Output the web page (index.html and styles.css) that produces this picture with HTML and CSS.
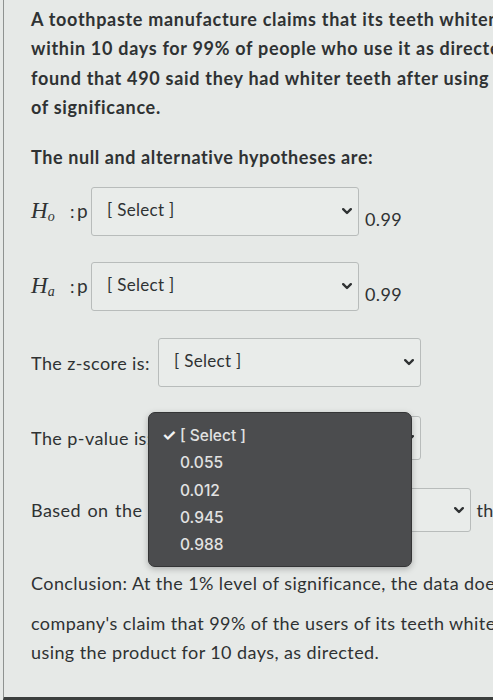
FILE: index.html
```html
<!DOCTYPE html>
<html>
<head>
<meta charset="utf-8">
<link rel="stylesheet" href="styles.css">
</head>
<body>
<div class="frame">
  <p class="question">A toothpaste manufacture claims that its teeth whitening product works<br>within 10 days for 99% of people who use it as directed. In a sample of 500 people, it was<br>found that 490 said they had whiter teeth after using the product. Test at the 1% level<br>of significance.</p>

  <p class="prompt">The null and alternative hypotheses are:</p>

  <div class="hyp first">
    <span class="label"><span class="math"><i>H</i><sub>o</sub></span><span class="colon">:</span><span class="pv">p</span></span>
    <div class="select wide"><span class="val">[ Select ]</span><svg class="chev" viewBox="0 0 10 7"><polyline points="1.2,1.2 5,5 8.8,1.2"/></svg></div>
    <span class="after">0.99</span>
  </div>

  <div class="hyp">
    <span class="label"><span class="math"><i>H</i><sub>a</sub></span><span class="colon">:</span><span class="pv">p</span></span>
    <div class="select wide"><span class="val">[ Select ]</span><svg class="chev" viewBox="0 0 10 7"><polyline points="1.2,1.2 5,5 8.8,1.2"/></svg></div>
    <span class="after">0.99</span>
  </div>

  <div class="row z">
    <span class="rlabel">The z-score is:</span>
    <div class="select mid"><span class="val">[ Select ]</span><svg class="chev" viewBox="0 0 10 7"><polyline points="1.2,1.2 5,5 8.8,1.2"/></svg></div>
  </div>

  <div class="row p">
    <span class="rlabel">The p-value is:</span>
    <div class="select mid short"><span class="val">[ Select ]</span><svg class="chev" viewBox="0 0 10 7"><polyline points="1.2,1.2 5,5 8.8,1.2"/></svg></div>
    <ul class="menu">
      <li class="checked"><span class="check">✓</span>[ Select ]</li>
      <li>0.055</li>
      <li>0.012</li>
      <li>0.945</li>
      <li>0.988</li>
    </ul>
  </div>

  <div class="row b">
    <span class="rlabel blabel">Based on the p-value, we</span>
    <div class="select based short"><span class="val">[ Select ]</span><svg class="chev" viewBox="0 0 10 7"><polyline points="1.2,1.2 5,5 8.8,1.2"/></svg></div>
    <span class="after2">the null hypothesis.</span>
  </div>

  <p class="concl">Conclusion: At the 1% level of significance, the data does not provide sufficient evidence to reject the</p>
  <p class="concl2">company's claim that 99% of the users of its teeth whitening product have whiter teeth after<br>using the product for 10 days, as directed.</p>
</div>
</body>
</html>
```

FILE: styles.css
```css
html, body {
  margin: 0;
  padding: 0;
}
body {
  width: 493px;
  height: 700px;
  overflow: hidden;
  background: #e6e9e7;
  font-family: "Lato", "Liberation Sans", sans-serif;
  color: #2f3233;
}
.frame {
  box-sizing: border-box;
  margin-left: 3px;
  height: 700px;
  border-left: 1px solid #8f9391;
  border-bottom: 3px solid #3c3f3e;
  padding: 5px 0 0 27px;
  white-space: nowrap;
  position: relative;
}
.question {
  margin: 0;
  font-size: 18px;
  font-weight: 700;
  letter-spacing: 0.7px;
  line-height: 29.3px;
}
.prompt {
  margin: 21px 0 0;
  font-size: 18px;
  font-weight: 700;
  letter-spacing: 0.6px;
  line-height: 29px;
}
.hyp {
  display: flex;
  align-items: center;
  margin-top: 15px;
}
.hyp + .hyp {
  margin-top: 26px;
}
.label {
  width: 60px;
  flex-shrink: 0;
  display: flex;
  align-items: baseline;
}
.math {
  font-family: "Liberation Serif", "DejaVu Serif", serif;
  font-size: 23px;
  width: 39px;
}
.math sub {
  font-style: italic;
  font-size: 14px;
  vertical-align: -3px;
}
.colon {
  font-size: 18px;
  width: 7px;
}
.pv {
  font-size: 19px;
}
.select {
  box-sizing: border-box;
  display: flex;
  align-items: center;
  justify-content: space-between;
  height: 49px;
  border: 1px solid #b8bcbb;
  border-radius: 3px;
  background: #e9ecea;
  padding: 0 5px 0 15px;
  font-size: 17px;
  letter-spacing: 0.3px;
  color: #2f3233;
  flex-shrink: 0;
}
.select.wide {
  width: 268px;
}
.select.mid {
  width: 263px;
}
.select.short {
  height: 44px;
}
.select.based {
  width: 220px;
}
.val {
  position: relative;
  top: -2px;
}
.chev {
  width: 10px;
  height: 7px;
  margin-right: 1px;
}
.chev polyline {
  fill: none;
  stroke: #2f3233;
  stroke-width: 2.4;
  stroke-linecap: round;
  stroke-linejoin: round;
}
.after {
  align-self: flex-end;
  flex-shrink: 0;
  margin: 0 0 7px 6px;
  font-size: 18px;
  letter-spacing: 0.4px;
  line-height: 20px;
}
.row {
  display: flex;
  align-items: center;
}
.row.z {
  margin-top: 27px;
}
.row.p {
  margin-top: 29px;
  position: relative;
}
.row.b {
  margin-top: 28px;
}
.rlabel {
  flex-shrink: 0;
  font-size: 18px;
  letter-spacing: 0.42px;
  margin-right: 6px;
  width: 121px;
  overflow: hidden;
}
.row.b .blabel {
  width: auto;
  margin-right: 6px;
  word-spacing: 1.5px;
}
.after2 {
  flex-shrink: 0;
  font-size: 18px;
  letter-spacing: 0.42px;
  margin-left: 5px;
}
.menu {
  position: absolute;
  left: 117px;
  top: -4px;
  width: 264px;
  box-sizing: border-box;
  margin: 0;
  padding: 9px 0 7px;
  list-style: none;
  background: #4b4c4e;
  border: 1px solid #343536;
  border-radius: 7px;
  box-shadow: 0 2px 6px rgba(0, 0, 0, 0.25);
  font-family: "Inter", "Noto Sans", sans-serif;
  font-size: 15.5px;
  font-weight: 500;
  color: #e2e2e2;
  z-index: 2;
}
.menu li {
  height: 27.3px;
  line-height: 27px;
  padding-left: 31px;
  position: relative;
}
.menu .check {
  position: absolute;
  left: 13px;
  top: 0;
  color: #f4f4f4;
  font-size: 16px;
  font-weight: 700;
}
.concl {
  margin: 37px 0 0;
  font-size: 18px;
  letter-spacing: 0.42px;
  line-height: 29px;
}
.concl2 {
  margin: 11px 0 0;
  font-size: 18px;
  letter-spacing: 0.42px;
  line-height: 29px;
}
```
